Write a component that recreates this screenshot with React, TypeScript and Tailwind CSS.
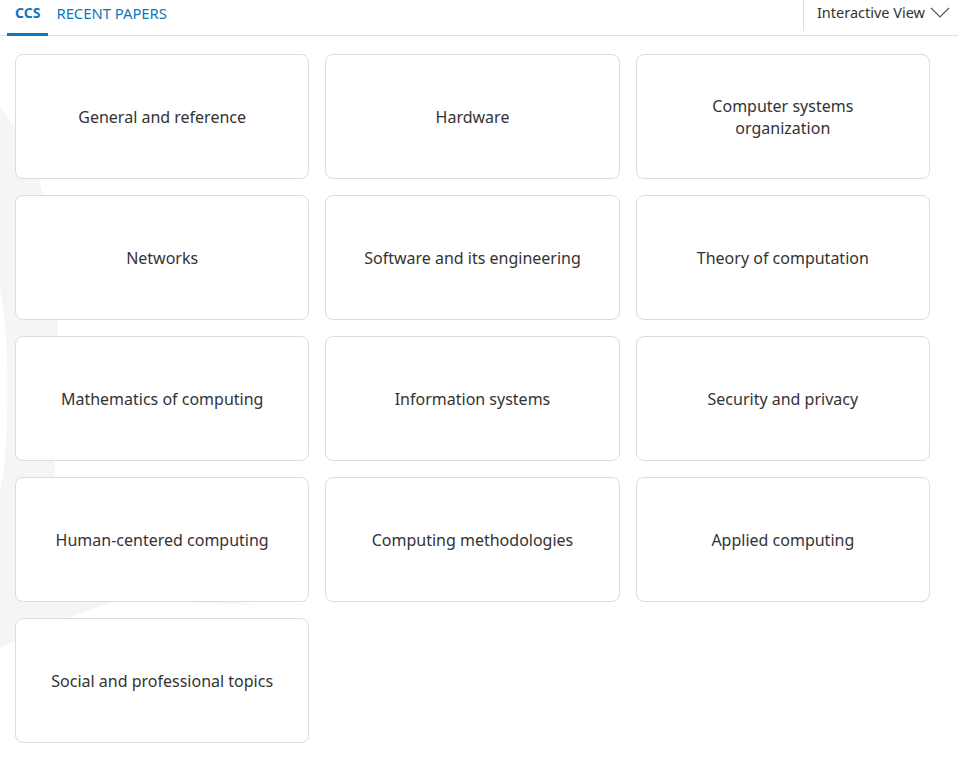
import React from 'react';

const topics = [
  'General and reference',
  'Hardware',
  'Computer systems organization',
  'Networks',
  'Software and its engineering',
  'Theory of computation',
  'Mathematics of computing',
  'Information systems',
  'Security and privacy',
  'Human-centered computing',
  'Computing methodologies',
  'Applied computing',
  'Social and professional topics',
];

function Watermark() {
  return (
    <svg className="absolute left-0 top-0 pointer-events-none" width="400" height="768" viewBox="0 0 400 768">
      <path
        d="M0 108 C 40 150 58 230 58 330 C 58 410 52 460 56 490 C 80 560 150 590 260 605 L 120 600 C 80 612 40 628 0 648 Z"
        fill="#f5f5f5"
      />
      <path d="M0 290 C 10 330 10 450 0 490 Z" fill="#ffffff" />
    </svg>
  );
}

export default function App() {
  return (
    <div className="relative w-[968px] h-[768px] bg-white overflow-hidden" style={{ fontFamily: '"Noto Sans", "Open Sans", sans-serif' }}>
      <Watermark />
      <div className="relative">
        {/* header */}
        <div className="flex items-stretch w-[958px] h-[36px] border-b border-[#dedede]">
          <div className="flex pl-[7px]">
            <div className="relative px-2 pt-[2px] text-[14px] font-bold text-[#0a78c0]">
              CCS
              <div className="absolute left-0 right-0 bottom-[-1px] h-[3px] bg-[#0a78c0]" />
            </div>
            <div className="px-[8px] pt-[2px] text-[14.8px] text-[#0a78c0]">RECENT PAPERS</div>
          </div>
          <div className="flex-1" />
          <div className="flex items-start h-[31px] border-l border-[#dedede] pl-[13px] pr-[8px] pt-[2px] text-[14.5px] text-[#333]">
            <span>Interactive View</span>
            <svg className="ml-[5px] mt-[5px]" width="20" height="12" viewBox="0 0 20 12">
              <path d="M1 1 L10 10 L19 1" fill="none" stroke="#555" strokeWidth="1.2" />
            </svg>
          </div>
        </div>

        {/* grid */}
        <div className="grid grid-cols-3 gap-x-[16px] gap-y-[16px] w-[915px] ml-[15px] mt-[18px]">
          {topics.map((t) => (
            <div
              key={t}
              className="h-[125px] flex items-center justify-center px-[30px] text-center text-[16px] leading-[22px] text-[#333] bg-white border border-[#dcdcdc] rounded-[8px]"
            >
              {t}
            </div>
          ))}
        </div>
      </div>
    </div>
  );
}
